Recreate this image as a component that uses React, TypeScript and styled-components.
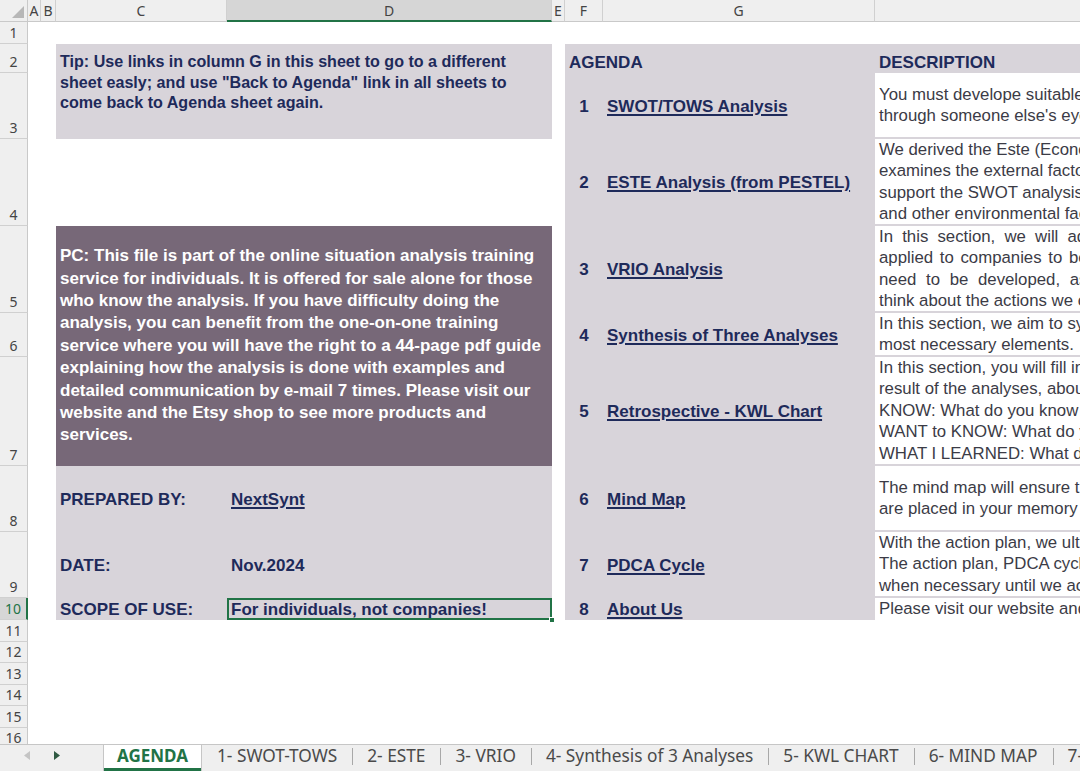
import styled, { createGlobalStyle, css } from "styled-components";

const GlobalStyle = createGlobalStyle`
  html, body {
    margin: 0;
    padding: 0;
    background: #ffffff;
    overflow: hidden;
  }
  body {
    width: 1080px;
    height: 771px;
  }
`;

const ARIAL = `"Liberation Sans", Arial, sans-serif`;
const UI_FONT = `"Noto Sans", "Open Sans", sans-serif`;

const NAVY = "#1e2a5a";
const PANEL = "#d8d4da";
const MAUVE = "#776878";
const EXCEL_GREEN = "#217346";

// row header + columns A..H
const COLUMN_WIDTHS = [28, 13, 15, 171, 325, 13, 38, 272, 480];
const COLUMN_LETTERS = ["A", "B", "C", "D", "E", "F", "G", "H"];
const ROW_HEIGHTS = [22, 29, 66, 87, 87, 44, 109, 66, 66, 22, 21.5, 21.5, 21.5, 21.5, 21.5, 21.5];

const SELECTED_COLUMN = "D";
const SELECTED_ROW = 10;

// sheet column letter -> grid column line
const col = (letter: string) => COLUMN_LETTERS.indexOf(letter) + 2;

type AgendaItem = {
  row: number;
  title: string;
  lines: string[];
  spacing?: number[];
};

const AGENDA: AgendaItem[] = [
  {
    row: 3,
    title: "SWOT/TOWS Analysis",
    lines: [
      "You must develope suitable strategies by looking at your situation",
      "through someone else's eyes, and SWOT/TOWS helps you do this.",
    ],
  },
  {
    row: 4,
    title: "ESTE Analysis (from PESTEL)",
    lines: [
      "We derived the Este (Economic, Social, Technological, Environmental)",
      "examines the external factors that can affect you as an individual to",
      "support the SWOT analysis. It covers economic, social, technological",
      "and other environmental factors around you.",
    ],
  },
  {
    // justified paragraph: extra word spacing on every line but the last
    row: 5,
    title: "VRIO Analysis",
    lines: [
      "In this section, we will adapt the VRIO analysis, which is usually",
      "applied to companies to better understand the resources that",
      "need to be developed, as well as the ones we already have, and",
      "think about the actions we can take.",
    ],
    spacing: [4.5, 2, 5, 0],
  },
  {
    row: 6,
    title: "Synthesis of Three Analyses",
    lines: [
      "In this section, we aim to synthesize the three analyses and find the",
      "most necessary elements.",
    ],
  },
  {
    row: 7,
    title: "Retrospective - KWL Chart",
    lines: [
      "In this section, you will fill in the KWL chart, which shows, as a",
      "result of the analyses, about what you have learned.",
      "KNOW: What do you know about yourself?",
      "WANT to KNOW: What do you want to know?",
      "WHAT I LEARNED: What did you learn?",
    ],
  },
  {
    row: 8,
    title: "Mind Map",
    lines: [
      "The mind map will ensure that the results of the analyses",
      "are placed in your memory visually.",
    ],
  },
  {
    row: 9,
    title: "PDCA Cycle",
    lines: [
      "With the action plan, we ultimately turn the analyses into action.",
      "The action plan, PDCA cycle, will be repeated and updated",
      "when necessary until we achieve our goals.",
    ],
  },
  {
    row: 10,
    title: "About Us",
    lines: ["Please visit our website and Etsy shop for more."],
  },
];

const SHEET_TABS = [
  "1- SWOT-TOWS",
  "2- ESTE",
  "3- VRIO",
  "4- Synthesis of 3 Analyses",
  "5- KWL CHART",
  "6- MIND MAP",
  "7- PDCA CYCLE",
  "8- ABOUT US",
];

export default function App() {
  return (
    <>
      <GlobalStyle />
      <Window>
        <Sheet>
          <Corner>
            <svg width="12" height="12" viewBox="0 0 12 12">
              <path d="M12 0 L12 12 L0 12 Z" fill="#b7b7b7" />
            </svg>
          </Corner>
          {COLUMN_LETTERS.map((letter) => (
            <ColumnHeader key={letter} $col={col(letter)} $selected={letter === SELECTED_COLUMN}>
              {letter !== "H" && letter}
            </ColumnHeader>
          ))}
          {ROW_HEIGHTS.map((_, i) => (
            <RowHeader key={i} $row={i + 1} $selected={i + 1 === SELECTED_ROW}>
              {i + 1}
            </RowHeader>
          ))}

          <Cell $row={2} $rowSpan={2} $col={col("C")} $colSpan={2} $tone="panel">
            <TipText>
              Tip: Use links in column G in this sheet to go to a different
              <br />
              sheet easly; and use "Back to Agenda" link in all sheets to
              <br />
              come back to Agenda sheet again.
            </TipText>
          </Cell>

          <Cell $row={5} $rowSpan={3} $col={col("C")} $colSpan={2} $tone="mauve" $middle>
            <NoteText>
              PC: This file is part of the online situation analysis training
              <br />
              service for individuals. It is offered for sale alone for those
              <br />
              who know the analysis. If you have difficulty doing the
              <br />
              analysis, you can benefit from the one-on-one training
              <br />
              service where you will have the right to a 44-page pdf guide
              <br />
              explaining how the analysis is done with examples and
              <br />
              detailed communication by e-mail 7 times. Please visit our
              <br />
              website and the Etsy shop to see more products and
              <br />
              services.
            </NoteText>
          </Cell>

          <Cell $row={8} $col={col("C")} $tone="panel" $middle>
            <Label>PREPARED BY:</Label>
          </Cell>
          <Cell $row={8} $col={col("D")} $tone="panel" $middle>
            <LinkText>NextSynt</LinkText>
          </Cell>
          <Cell $row={9} $col={col("C")} $tone="panel" $middle>
            <Label>DATE:</Label>
          </Cell>
          <Cell $row={9} $col={col("D")} $tone="panel" $middle>
            <Label>Nov.2024</Label>
          </Cell>
          <Cell $row={10} $col={col("C")} $tone="panel" $middle>
            <Label>SCOPE OF USE:</Label>
          </Cell>
          <ActiveCell $row={10} $col={col("D")} $tone="panel" $middle>
            <Label>For individuals, not companies!</Label>
          </ActiveCell>

          <Cell $row={2} $col={col("F")} $colSpan={2} $tone="panel" $bottom>
            <Label>AGENDA</Label>
          </Cell>
          <Cell $row={2} $col={col("H")} $tone="panel" $bottom>
            <Label>DESCRIPTION</Label>
          </Cell>

          {AGENDA.map((item, i) => (
            <AgendaRow key={item.row} item={item} index={i + 1} last={i === AGENDA.length - 1} />
          ))}
        </Sheet>

        <TabBar>
          <TabNav>
            <svg width="6" height="9" viewBox="0 0 6 9">
              <path d="M6 0 L0 4.5 L6 9 Z" fill="#c4c4c4" />
            </svg>
            <svg width="6" height="9" viewBox="0 0 6 9">
              <path d="M0 0 L6 4.5 L0 9 Z" fill="#2f5a43" />
            </svg>
          </TabNav>
          <ActiveTab>AGENDA</ActiveTab>
          {SHEET_TABS.map((name, i) => (
            <Tab key={name} $divider={i > 0}>
              {name}
            </Tab>
          ))}
        </TabBar>
      </Window>
    </>
  );
}

function AgendaRow({ item, index, last }: { item: AgendaItem; index: number; last: boolean }) {
  return (
    <>
      <Cell $row={item.row} $col={col("F")} $tone="panel" $middle $center>
        <Label>{index}</Label>
      </Cell>
      <Cell $row={item.row} $col={col("G")} $tone="panel" $middle>
        <LinkText>{item.title}</LinkText>
      </Cell>
      <DescriptionCell $row={item.row} $col={col("H")} $tone="white" $middle $last={last}>
        {item.lines.map((line, i) => (
          <DescriptionLine key={i} style={item.spacing ? { wordSpacing: item.spacing[i] } : undefined}>
            {line}
          </DescriptionLine>
        ))}
      </DescriptionCell>
    </>
  );
}

const Window = styled.div`
  width: 1080px;
  height: 771px;
  display: flex;
  flex-direction: column;
  overflow: hidden;
  background: #ffffff;
`;

const Sheet = styled.div`
  flex: 1;
  min-height: 0;
  overflow: hidden;
  display: grid;
  grid-template-columns: ${COLUMN_WIDTHS.map((w) => `${w}px`).join(" ")};
  grid-template-rows: 22px ${ROW_HEIGHTS.map((h) => `${h}px`).join(" ")};
`;

const Corner = styled.div`
  grid-row: 1;
  grid-column: 1;
  background: #efefef;
  border-right: 1px solid #c9c9c9;
  border-bottom: 1px solid #c9c9c9;
  display: flex;
  align-items: flex-end;
  justify-content: flex-end;
  padding: 0 3px 3px 0;
  box-sizing: border-box;
`;

const ColumnHeader = styled.div<{ $col: number; $selected: boolean }>`
  grid-row: 1;
  grid-column: ${(p) => p.$col};
  box-sizing: border-box;
  display: flex;
  align-items: center;
  justify-content: center;
  font-family: ${UI_FONT};
  font-size: 14px;
  color: #444444;
  background: ${(p) => (p.$selected ? "#d6d6d6" : "#efefef")};
  border-right: 1px solid #d0d0d0;
  border-bottom: ${(p) => (p.$selected ? `2px solid ${EXCEL_GREEN}` : "1px solid #c9c9c9")};
  overflow: hidden;
`;

// sheet row r sits on grid row r + 1, under the column header strip
const RowHeader = styled.div<{ $row: number; $selected: boolean }>`
  grid-row: ${(p) => p.$row + 1};
  grid-column: 1;
  box-sizing: border-box;
  display: flex;
  align-items: flex-end;
  justify-content: center;
  padding-bottom: 1px;
  font-family: ${UI_FONT};
  font-size: 14px;
  line-height: 18px;
  color: ${(p) => (p.$selected ? EXCEL_GREEN : "#444444")};
  background: ${(p) => (p.$selected ? "#d6d6d6" : "#efefef")};
  border-bottom: 1px solid #d0d0d0;
  border-right: ${(p) => (p.$selected ? `2px solid ${EXCEL_GREEN}` : "1px solid #c9c9c9")};
`;

type CellProps = {
  $row: number;
  $col: number;
  $rowSpan?: number;
  $colSpan?: number;
  $tone: "panel" | "mauve" | "white";
  $middle?: boolean;
  $bottom?: boolean;
  $center?: boolean;
};

const TONES = {
  panel: PANEL,
  mauve: MAUVE,
  white: "#ffffff",
};

const Cell = styled.div<CellProps>`
  grid-row: ${(p) => p.$row + 1} / span ${(p) => p.$rowSpan ?? 1};
  grid-column: ${(p) => p.$col} / span ${(p) => p.$colSpan ?? 1};
  position: relative;
  box-sizing: border-box;
  min-width: 0;
  display: flex;
  flex-direction: column;
  justify-content: ${(p) => (p.$middle ? "center" : p.$bottom ? "flex-end" : "flex-start")};
  align-items: ${(p) => (p.$center ? "center" : "flex-start")};
  padding: 0 4px;
  background: ${(p) => TONES[p.$tone]};
  white-space: nowrap;
  overflow: hidden;
`;

const ActiveCell = styled(Cell)`
  overflow: visible;
  box-shadow: inset 0 0 0 2px ${EXCEL_GREEN};

  &::after {
    content: "";
    position: absolute;
    right: -3px;
    bottom: -3px;
    width: 6px;
    height: 6px;
    background: ${EXCEL_GREEN};
    border: 1px solid #ffffff;
    box-sizing: border-box;
  }
`;

const DescriptionCell = styled(Cell)<{ $last: boolean }>`
  border-bottom: ${(p) => (p.$last ? "none" : `2px solid ${PANEL}`)};
`;

const boldText = css`
  font-family: ${ARIAL};
  font-weight: 700;
  font-size: 17px;
  color: ${NAVY};
`;

const TipText = styled.p`
  ${boldText};
  margin: 0;
  padding-top: 7px;
  font-size: 16.1px;
  line-height: 20.5px;
`;

const NoteText = styled.p`
  ${boldText};
  margin: 0;
  color: #ffffff;
  line-height: 22.4px;
`;

const Label = styled.span`
  ${boldText};
  line-height: 21px;
`;

const LinkText = styled.span`
  ${boldText};
  line-height: 21px;
  text-decoration: underline;
  text-decoration-thickness: 1.5px;
  text-underline-offset: 2px;
`;

const DescriptionLine = styled.span`
  display: block;
  font-family: ${ARIAL};
  font-size: 16.8px;
  line-height: 21.5px;
  color: #3b3b46;
`;

const TabBar = styled.div`
  height: 27px;
  flex-shrink: 0;
  display: flex;
  align-items: stretch;
  background: #efefef;
  border-top: 1px solid #c6c6c6;
  box-sizing: border-box;
  font-family: ${UI_FONT};
  white-space: nowrap;
  overflow: hidden;
`;

const TabNav = styled.div`
  width: 103px;
  flex-shrink: 0;
  display: flex;
  align-items: center;
  gap: 24px;
  padding-left: 24px;
  padding-bottom: 5px;
  box-sizing: border-box;
`;

const ActiveTab = styled.div`
  flex-shrink: 0;
  display: flex;
  align-items: center;
  padding: 0 13px 5px;
  margin-top: -1px;
  background: #ffffff;
  border-left: 1px solid #c6c6c6;
  border-right: 1px solid #c6c6c6;
  box-shadow: inset 0 -3px 0 ${EXCEL_GREEN};
  font-size: 17px;
  font-weight: 700;
  color: ${EXCEL_GREEN};
`;

const Tab = styled.div<{ $divider: boolean }>`
  flex-shrink: 0;
  display: flex;
  align-items: center;
  position: relative;
  padding: 0 15px 5px;
  font-size: 17.3px;
  color: #4a4a4a;

  ${(p) =>
    p.$divider &&
    css`
      &::before {
        content: "";
        position: absolute;
        left: 0;
        top: 3px;
        bottom: 6px;
        width: 1px;
        background: #a8a8a8;
      }
    `}
`;
